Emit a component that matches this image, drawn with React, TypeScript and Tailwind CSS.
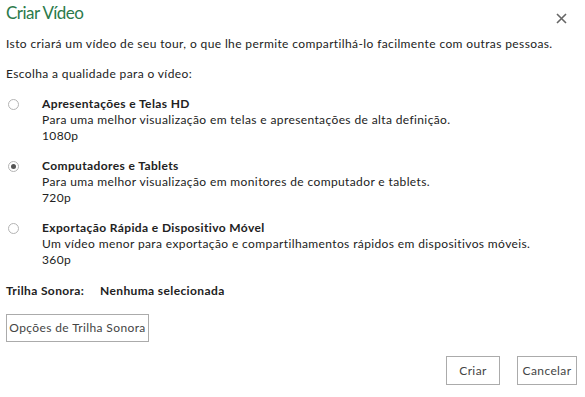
import React from "react";

const font = { fontFamily: '"Segoe UI", Lato, "Open Sans", sans-serif' };

function Radio({ checked }: { checked?: boolean }) {
  return (
    <div className="w-[11px] h-[11px] rounded-full border border-[#b4b4b4] bg-white flex items-center justify-center mt-[3px] shrink-0">
      {checked && <div className="w-[5px] h-[5px] rounded-full bg-[#555]" />}
    </div>
  );
}

function Option({ title, desc, res, checked }: { title: string; desc: string; res: string; checked?: boolean }) {
  return (
    <div className="flex">
      <div className="w-[36px] pl-[2px]">
        <Radio checked={checked} />
      </div>
      <div className="flex flex-col leading-[16px]">
        <div className="font-bold text-[#222]">{title}</div>
        <div>{desc}</div>
        <div>{res}</div>
      </div>
    </div>
  );
}

export default function App() {
  return (
    <div className="w-[585px] h-[397px] bg-white text-[12px] tracking-[0.38px] text-[#222] relative" style={font}>
      <div className="flex flex-col px-[6px]">
        <div className="text-[17px] font-normal tracking-[-0.5px] leading-[24px] text-[#2b7a4b] pt-[1px]">Criar Vídeo</div>
        <div className="mt-[11px] leading-[16px]">Isto criará um vídeo de seu tour, o que lhe permite compartilhá-lo facilmente com outras pessoas.</div>
        <div className="mt-[14px] leading-[16px]">Escolha a qualidade para o vídeo:</div>
        <div className="mt-[14px] flex flex-col gap-[14px]">
          <Option title="Apresentações e Telas HD" desc="Para uma melhor visualização em telas e apresentações de alta definição." res="1080p" />
          <Option checked title="Computadores e Tablets" desc="Para uma melhor visualização em monitores de computador e tablets." res="720p" />
          <Option title="Exportação Rápida e Dispositivo Móvel" desc="Um vídeo menor para exportação e compartilhamentos rápidos em dispositivos móveis." res="360p" />
        </div>
        <div className="mt-[15px] flex font-bold leading-[16px]">
          <div className="w-[94px]">Trilha Sonora:</div>
          <div>Nenhuma selecionada</div>
        </div>
        <div className="mt-[15px]">
          <button className="h-[28px] w-[143px] border border-[#ababab] bg-white text-[#444]">Opções de Trilha Sonora</button>
        </div>
        <div className="mt-[14px] flex justify-end gap-[17px] pr-[2px]">
          <button className="h-[29px] w-[54px] border border-[#ababab] bg-white text-[#444]">Criar</button>
          <button className="h-[29px] w-[60px] border border-[#ababab] bg-white text-[#444]">Cancelar</button>
        </div>
      </div>
      <button className="absolute left-[556px] top-[13px] w-[11px] h-[11px]">
        <svg viewBox="0 0 11 11" width="11" height="11">
          <path d="M1 1 L10 10 M10 1 L1 10" stroke="#666" strokeWidth="1.6" />
        </svg>
      </button>
    </div>
  );
}
